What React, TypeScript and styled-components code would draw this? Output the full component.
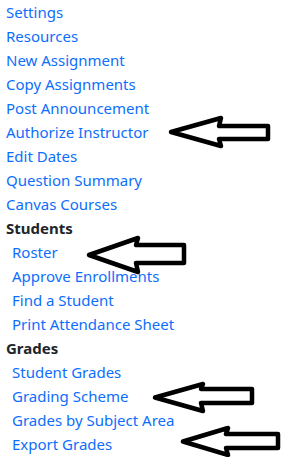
import React from "react";
import styled, { createGlobalStyle } from "styled-components";

const Global = createGlobalStyle`
  html, body { margin: 0; padding: 0; background: #fff; }
  body { font-family: "Noto Sans", "Open Sans", sans-serif; }
`;

const Page = styled.div`
  position: relative;
  width: 285px;
  height: 457px;
  overflow: hidden;
  padding: 0 0 0 6px;
  box-sizing: border-box;
`;

const List = styled.ul<{ $indent?: number }>`
  list-style: none;
  margin: 0;
  padding: 0 0 0 ${(p) => p.$indent ?? 0}px;
  font-size: 15px;
  line-height: 24px;
`;

const Item = styled.li``;

const Link = styled.a`
  color: #0d6efd;
  text-decoration: none;
`;

const Heading = styled.li`
  font-weight: 700;
  color: #212529;
`;

const ArrowBox = styled.svg`
  position: absolute;
  overflow: visible;
`;

type ArrowProps = {
  x: number;
  y: number;
  w: number;
  h: number;
  head: number;
  shaftTop: number;
  shaftBottom: number;
};

function Arrow({ x, y, w, h, head, shaftTop, shaftBottom }: ArrowProps) {
  const mid = h / 2;
  const pts = [
    [0, mid],
    [head, 0],
    [head - 2, shaftTop],
    [w, shaftTop],
    [w, shaftBottom],
    [head - 2, shaftBottom],
    [head, h],
  ]
    .map((p) => p.join(","))
    .join(" ");
  return (
    <ArrowBox
      style={{ left: x, top: y }}
      width={w}
      height={h}
      viewBox={`0 0 ${w} ${h}`}
    >
      <polygon
        points={pts}
        fill="#fff"
        stroke="#000"
        strokeWidth={4.5}
        strokeLinejoin="round"
      />
    </ArrowBox>
  );
}

const top = [
  "Settings",
  "Resources",
  "New Assignment",
  "Copy Assignments",
  "Post Announcement",
  "Authorize Instructor",
  "Edit Dates",
  "Question Summary",
  "Canvas Courses",
];
const students = ["Roster", "Approve Enrollments", "Find a Student", "Print Attendance Sheet"];
const grades = ["Student Grades", "Grading Scheme", "Grades by Subject Area", "Export Grades"];

export default function App() {
  return (
    <>
      <Global />
      <Page>
        <List>
          {top.map((t) => (
            <Item key={t}>
              <Link href="#">{t}</Link>
            </Item>
          ))}
          <Heading>Students</Heading>
          <Item>
            <List $indent={6}>
              {students.map((t) => (
                <Item key={t}>
                  <Link href="#">{t}</Link>
                </Item>
              ))}
            </List>
          </Item>
          <Heading>Grades</Heading>
          <Item>
            <List $indent={6}>
              {grades.map((t) => (
                <Item key={t}>
                  <Link href="#">{t}</Link>
                </Item>
              ))}
            </List>
          </Item>
        </List>
        <Arrow x={171} y={118} w={97} h={28} head={50} shaftTop={8} shaftBottom={21} />
        <Arrow x={89} y={238} w={95} h={34} head={49} shaftTop={7} shaftBottom={25} />
        <Arrow x={155} y={384} w={97} h={27} head={48} shaftTop={5} shaftBottom={19} />
        <Arrow x={183} y={428} w={95} h={27} head={45} shaftTop={6} shaftBottom={20} />
      </Page>
    </>
  );
}
